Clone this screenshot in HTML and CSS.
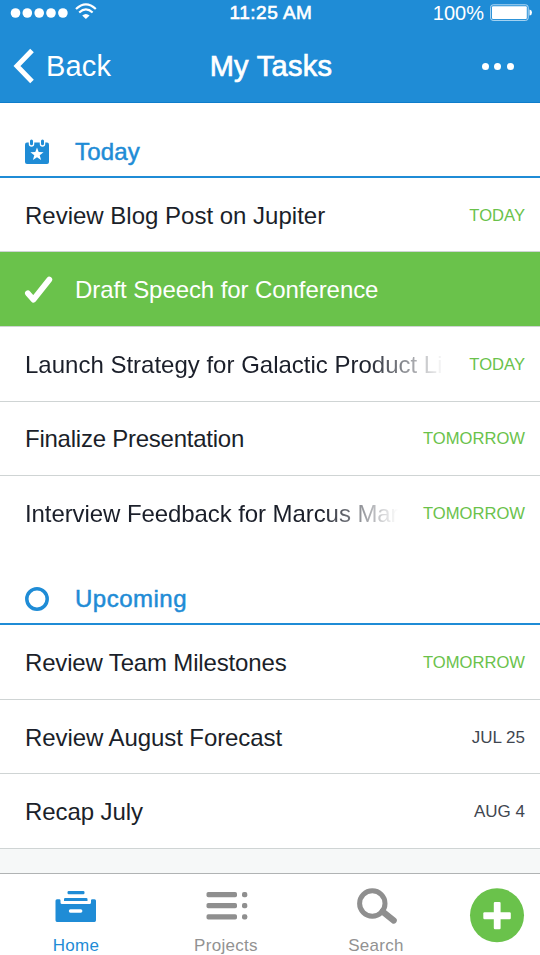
FILE: index.html
```html
<!DOCTYPE html>
<html lang="en">
<head>
<meta charset="utf-8">
<title>My Tasks</title>
<link rel="stylesheet" href="styles.css">
</head>
<body>
<div class="app">
  <header class="top">
    <div class="status">
      <div class="signal">
        <svg width="88" height="24" viewBox="0 0 88 24" fill="#fff">
          <circle cx="5.500" cy="12" r="4.800"/><circle cx="17.300" cy="12" r="4.800"/><circle cx="29.200" cy="12" r="4.800"/><circle cx="41" cy="12" r="4.800"/><circle cx="52.900" cy="12" r="4.800"/>
          <g fill="none" stroke="#fff" stroke-width="2.200"><path d="M66 8Q75.900-1.400 85.800 8"/><path d="M69.200 11.500Q75.900 5.300 82.600 11.500"/></g>
          <path d="M72.200 14.500Q75.900 11.300 79.600 14.500L75.900 18.100Z"/>
        </svg>
      </div>
      <div class="clock">11:25 AM</div>
      <div class="power"><span>100%</span>
        <svg width="42" height="18" viewBox="0 0 42 18"><rect x=".6" y=".8" width="37.600" height="15.600" rx="2.500" fill="none" stroke="#b5daf4"/><rect x="2" y="2.200" width="34.800" height="12.800" rx="1" fill="#fff"/><path d="M39.500 5.500Q42 6 42 8.500T39.500 11.500Z" fill="#fff"/></svg>
      </div>
    </div>
    <nav class="bar">
      <div class="back"><svg width="22" height="36" viewBox="0 0 22 36"><path d="M19 2.400 4 18l15 15.600" fill="none" stroke="#fff" stroke-width="5"/></svg><span>Back</span></div>
      <h1>My Tasks</h1>
      <div class="more"><i></i><i></i><i></i></div>
    </nav>
  </header>

  <main>
    <h2 class="section">
      <svg width="24" height="26" viewBox="0 0 24 26"><path d="M2 3.500H22Q24 3.500 24 5.500V23Q24 25 22 25H2Q0 25 0 23V5.500Q0 3.500 2 3.500Z" fill="#1f8cd6"/><path d="M6.500 2V5M17.500 2V5" stroke="#fff" stroke-width="5.500" stroke-linecap="round"/><path d="M6.500 2V4.800M17.500 2V4.800" stroke="#1f8cd6" stroke-width="3" stroke-linecap="round"/><path d="m12 8.500 1.700 4.600 4.900.1-3.900 3 1.400 4.900-4.100-2.900-4.100 2.900 1.400-4.900-3.900-3 4.900-.1Z" fill="#fff"/></svg>
      <span>Today</span>
    </h2>
    <div class="row first"><span class="name">Review Blog Post on Jupiter</span><span class="due">TODAY</span></div>
    <div class="row tall done">
      <svg width="28" height="28" viewBox="0 0 28 28"><path d="M2.900 17.300 8.400 23.600 24.300 3.600" fill="none" stroke="#fff" stroke-width="5.800" stroke-linecap="round" stroke-linejoin="round"/></svg>
      <span class="name snug">Draft Speech for Conference</span>
    </div>
    <div class="row tall"><span class="name fade">Launch Strategy for Galactic Product Li</span><span class="due">TODAY</span></div>
    <div class="row"><span class="name tight">Finalize Presentation</span><span class="due">TOMORROW</span></div>
    <div class="row last"><span class="name fade snug">Interview Feedback for Marcus Mar</span><span class="due">TOMORROW</span></div>

    <h2 class="section upcoming">
      <svg width="24" height="26" viewBox="0 0 24 26"><circle cx="12" cy="13" r="10.200" fill="none" stroke="#1f8cd6" stroke-width="3.500"/></svg>
      <span>Upcoming</span>
    </h2>
    <div class="row tall"><span class="name close">Review Team Milestones</span><span class="due">TOMORROW</span></div>
    <div class="row first"><span class="name snug">Review August Forecast</span><span class="due later">JUL 25</span></div>
    <div class="row tall"><span class="name snug">Recap July</span><span class="due later">AUG 4</span></div>
  </main>

  <footer class="tabs">
    <div class="tab active">
      <svg width="42" height="38" viewBox="0 0 42 38" fill="#1f8cd6"><rect x="12.500" y="4" width="17" height="3.300" rx="1.200"/><path d="M9 14V12Q9 11 10.200 11H31.300Q32.500 11 32.500 12V14Z"/><path fill-rule="evenodd" d="M.5 13.800Q.5 12.300 2 12.300H4.300Q5.500 12.300 5.500 13.500V15.500Q5.500 17 7 17H34.500Q36 17 36 15.500V13.500Q36 12.300 37.200 12.300H39.500Q41 12.300 41 13.800V33.300Q41 35 39.500 35H2Q.5 35 .5 33.300ZM15.400 22.300Q13.800 22.300 13.800 24T15.400 25.700H25.800Q27.400 25.700 27.400 24T25.800 22.300Z"/></svg>
      <span>Home</span>
    </div>
    <div class="tab">
      <svg width="42" height="38" viewBox="0 0 42 38" fill="#8f8f8f"><rect x="1.500" y="5" width="30.500" height="5.300" rx="1.800"/><rect x="1.500" y="16" width="30.500" height="5.300" rx="1.800"/><rect x="1.500" y="27.200" width="30.500" height="5.300" rx="1.800"/><rect x="37" y="5" width="5.300" height="5.300" rx="2"/><rect x="37" y="16" width="5.300" height="5.300" rx="2"/><rect x="37" y="27.200" width="5.300" height="5.300" rx="2"/></svg>
      <span>Projects</span>
    </div>
    <div class="tab">
      <svg width="42" height="38" viewBox="0 0 42 38" fill="none" stroke="#8f8f8f"><circle cx="17.300" cy="16.500" r="12.700" stroke-width="5"/><path d="M27.500 24.500 38.700 33.500" stroke-width="6.200" stroke-linecap="round"/></svg>
      <span>Search</span>
    </div>
    <div class="add"><svg width="54" height="54" viewBox="0 0 54 54"><circle cx="27" cy="27.300" r="27" fill="#6ac24b"/><rect x="13.300" y="24.200" width="27.500" height="7" rx="1.200" fill="#fff"/><rect x="23.800" y="13.900" width="6.800" height="27.300" rx="1.200" fill="#fff"/></svg></div>
  </footer>
</div>
</body>
</html>
```
FILE: styles.css
```css
* { box-sizing: border-box; }
body { margin: 0; font-family: "Liberation Sans", Arial, sans-serif; background: #f6f8f8; }
svg { display: block; flex: none; overflow: visible; }
.app { width: 540px; height: 955px; display: flex; flex-direction: column; overflow: hidden; }

.top { height: 103px; background: #1f8cd6; color: #fff; border-bottom: 1px solid #0f7dcb; }
.status { height: 25px; display: grid; grid-template-columns: 1fr 1fr 1fr; align-items: center; padding: 0 8px 0 10px; }
.clock { text-align: center; font-size: 19px; letter-spacing: .5px; -webkit-text-stroke: .6px #fff; white-space: nowrap; }
.power { display: flex; justify-content: flex-end; align-items: center; gap: 6px; font-size: 20px; }
.power span { padding-top: 1px; }
.bar { height: 77px; display: grid; grid-template-columns: 1fr auto 1fr; align-items: center; padding: 5px 26px 0 13px; font-size: 29px; }
.back { display: flex; align-items: center; gap: 11px; letter-spacing: .2px; }
h1 { margin: 0; padding-left: 15px; font-size: 29px; font-weight: 400; letter-spacing: .3px; -webkit-text-stroke: .7px #fff; }
.more { display: flex; justify-content: flex-end; gap: 5.600px; }
.more i { width: 7px; height: 7px; border-radius: 50%; background: #fff; }

main { height: 746px; flex: none; background: #fff; }
.section { margin: 0; height: 75px; padding: 24px 25px 0; display: flex; align-items: center; gap: 26px; border-bottom: 2px solid #1f8cd6; color: #1f8cd6; font-size: 24px; font-weight: 400; letter-spacing: .2px; -webkit-text-stroke: .5px #1f8cd6; }
.upcoming { letter-spacing: .5px; }
.row { height: 74px; padding: 1px 15px 0 25px; display: flex; align-items: center; border-bottom: 1px solid #cfd4d4; color: #1b1f2a; }
.row.first { padding-top: 3px; }
.row.tall { height: 75px; padding-top: 2px; }
.row.last { border-bottom: 0; padding-top: 2px; }
.name { flex: 1; min-width: 0; font-size: 24px; white-space: nowrap; }
.snug { letter-spacing: -.08px; }
.close { letter-spacing: -.16px; }
.tight { letter-spacing: -.24px; }
.fade { margin-right: 25px; -webkit-mask-image: linear-gradient(to left, transparent, #000 78px); mask-image: linear-gradient(to left, transparent, #000 78px); }
.due { flex: none; font-size: 16.600px; color: #6ac24b; }
.later { color: #3f4650; font-size: 17px; }
.row.done { background: #6ac24b; color: #fff; gap: 22px; }

.tabs { margin-top: auto; height: 82px; flex: none; display: flex; background: #fff; border-top: 1px solid #b0b3b4; padding-left: 1px; }
.tab { width: 150px; flex: none; padding-top: 13px; display: flex; flex-direction: column; align-items: center; gap: 11px; color: #929292; font-size: 17px; letter-spacing: .3px; }
.tab.active { color: #1f8cd6; }
.add { padding: 14px 0 0 19px; }
```
